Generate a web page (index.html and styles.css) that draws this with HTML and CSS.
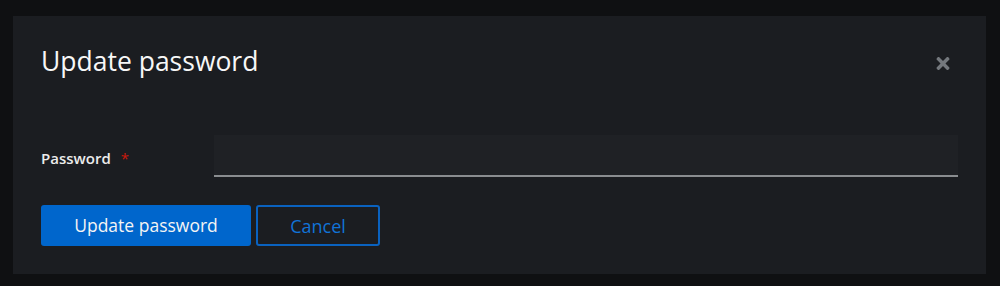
FILE: index.html
```html
<!DOCTYPE html>
<html lang="en">
<head>
<meta charset="utf-8">
<title>Update password</title>
<link rel="stylesheet" href="styles.css">
</head>
<body>
<div class="backdrop">
  <div class="modal" role="dialog" aria-labelledby="modal-title">
    <header class="modal-header">
      <h1 class="modal-title" id="modal-title">Update password</h1>
      <button class="close-btn" type="button" aria-label="Close">
        <svg class="close-icon" viewBox="0 80 352 352" aria-hidden="true">
          <path d="M242.72 256l100.07-100.07c12.28-12.28 12.28-32.19 0-44.48l-22.24-22.240c-12.28-12.28-32.19-12.28-44.48 0L176 189.28 75.930 89.21c-12.28-12.28-32.19-12.28-44.48 0L9.21 111.45c-12.28 12.28-12.28 32.19 0 44.48L109.28 256 9.21 356.07c-12.28 12.28-12.28 32.19 0 44.48l22.24 22.24c12.28 12.28 32.2 12.28 44.48 0L176 322.72l100.07 100.07c12.28 12.28 32.2 12.28 44.48 0l22.24-22.24c12.28-12.28 12.28-32.19 0-44.48L242.72 256z"/>
        </svg>
      </button>
    </header>
    <form class="modal-form">
      <div class="form-row">
        <label class="form-label" for="password">Password <span class="required">*</span></label>
        <input class="form-input" id="password" type="password">
      </div>
      <div class="actions">
        <button class="btn btn-primary" type="button">Update password</button>
        <button class="btn btn-secondary" type="button">Cancel</button>
      </div>
    </form>
  </div>
</div>
</body>
</html>
```

FILE: styles.css
```css
html, body {
  margin: 0;
  padding: 0;
}

body {
  width: 1000px;
  height: 286px;
  background: #0f1012;
  font-family: "Open Sans", "Noto Sans", sans-serif;
  color: #f0f0f0;
  overflow: hidden;
}

.backdrop {
  padding: 16px 14px 12px 13px;
}

.modal {
  box-sizing: border-box;
  width: 973px;
  height: 258px;
  background: #1b1d21;
  padding: 28px 28px 28px 28px;
  display: flex;
  flex-direction: column;
}

.modal-header {
  display: flex;
  align-items: center;
  justify-content: space-between;
  height: 35px;
}

.modal-title {
  margin: 0;
  font-size: 26.5px;
  line-height: 35px;
  font-weight: 400;
  color: #f7f7f7;
  letter-spacing: 0;
}

.close-btn {
  background: transparent;
  border: 0;
  padding: 0 8px;
  margin-top: 3px;
  display: flex;
  align-items: center;
  cursor: pointer;
}

.close-icon {
  width: 14px;
  height: 13px;
  fill: #74787d;
}

.modal-form {
  margin: 56px 0 0 0;
}

.form-row {
  display: grid;
  grid-template-columns: 173px 1fr;
  align-items: center;
}

.form-label {
  font-size: 15px;
  font-weight: 600;
  color: #ececec;
  line-height: 20px;
  padding-top: 3px;
}

.required {
  color: #c9190b;
  margin-left: 6px;
  font-weight: 400;
}

.form-input {
  box-sizing: border-box;
  height: 42px;
  width: 100%;
  margin: 0;
  background: #1f2125;
  border: 0;
  border-bottom: 2px solid #8a8d90;
  color: #f0f0f0;
  font: inherit;
  padding: 0 10px;
  outline: none;
}

.actions {
  display: flex;
  gap: 5px;
  margin-top: 28px;
}

.btn {
  box-sizing: border-box;
  height: 41px;
  border-radius: 3px;
  font-family: "Open Sans", "Noto Sans", sans-serif;
  font-size: 17.5px;
  font-weight: 400;
  line-height: 1;
  cursor: pointer;
}

.btn-primary {
  width: 210px;
  background: #0066cc;
  border: 0;
  color: #f4f4f4;
}

.btn-secondary {
  width: 124px;
  background: transparent;
  border: 2px solid #0a62bf;
  color: #1173d6;
  font-size: 18px;
}
```
